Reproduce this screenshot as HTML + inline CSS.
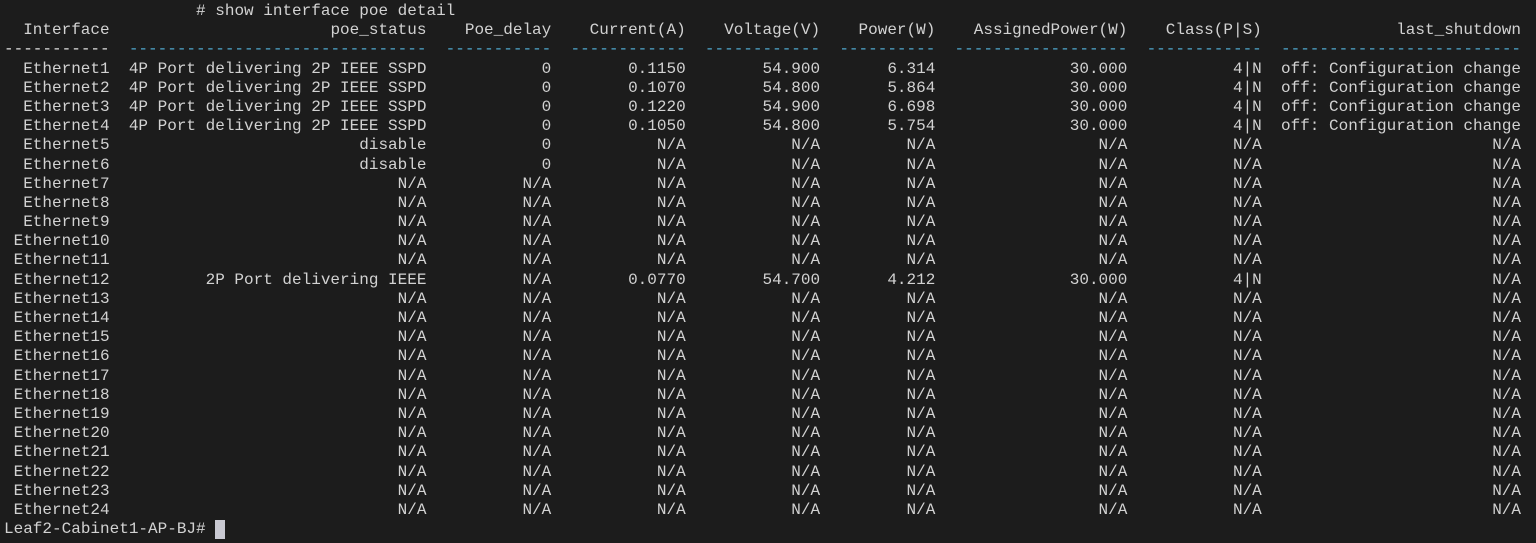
<!DOCTYPE html>
<html><head><meta charset="utf-8">
<style>
html,body{margin:0;padding:0;background:#1c1c1c;width:1536px;height:543px;overflow:hidden}
#t{position:absolute;left:4px;top:2px;font-family:"Liberation Mono",monospace;font-size:16px;line-height:19.2px;color:#d2d2d2;white-space:normal}
.r{display:flex;height:19.2px}
.r span{display:block;text-align:right;margin-right:2ch;overflow:visible;white-space:pre}
.r span:last-child{margin-right:0}
.c1{width:11ch}.c2{width:31ch}.c3{width:11ch}.c4{width:12ch}.c5{width:12ch}.c6{width:10ch}.c7{width:18ch}.c8{width:12ch}.c9{width:25ch}
.d span{color:#4fa9cf}
.d span.c1{color:#e0e0e0}
.cur{display:inline-block;width:10px;height:19px;background:#c9c9d2;vertical-align:top;margin-left:9px}
</style></head><body>
<div id="t"><div class="r"><span style="text-align:left">                    # show interface poe detail</span></div>
<div class="r"><span class="c1">Interface</span><span class="c2">poe_status</span><span class="c3">Poe_delay</span><span class="c4">Current(A)</span><span class="c5">Voltage(V)</span><span class="c6">Power(W)</span><span class="c7">AssignedPower(W)</span><span class="c8">Class(P|S)</span><span class="c9">last_shutdown</span></div>
<div class="r d"><span class="c1">-----------</span><span class="c2">-------------------------------</span><span class="c3">-----------</span><span class="c4">------------</span><span class="c5">------------</span><span class="c6">----------</span><span class="c7">------------------</span><span class="c8">------------</span><span class="c9">-------------------------</span></div>
<div class="r"><span class="c1">Ethernet1</span><span class="c2">4P Port delivering 2P IEEE SSPD</span><span class="c3">0</span><span class="c4">0.1150</span><span class="c5">54.900</span><span class="c6">6.314</span><span class="c7">30.000</span><span class="c8">4|N</span><span class="c9">off: Configuration change</span></div>
<div class="r"><span class="c1">Ethernet2</span><span class="c2">4P Port delivering 2P IEEE SSPD</span><span class="c3">0</span><span class="c4">0.1070</span><span class="c5">54.800</span><span class="c6">5.864</span><span class="c7">30.000</span><span class="c8">4|N</span><span class="c9">off: Configuration change</span></div>
<div class="r"><span class="c1">Ethernet3</span><span class="c2">4P Port delivering 2P IEEE SSPD</span><span class="c3">0</span><span class="c4">0.1220</span><span class="c5">54.900</span><span class="c6">6.698</span><span class="c7">30.000</span><span class="c8">4|N</span><span class="c9">off: Configuration change</span></div>
<div class="r"><span class="c1">Ethernet4</span><span class="c2">4P Port delivering 2P IEEE SSPD</span><span class="c3">0</span><span class="c4">0.1050</span><span class="c5">54.800</span><span class="c6">5.754</span><span class="c7">30.000</span><span class="c8">4|N</span><span class="c9">off: Configuration change</span></div>
<div class="r"><span class="c1">Ethernet5</span><span class="c2">disable</span><span class="c3">0</span><span class="c4">N/A</span><span class="c5">N/A</span><span class="c6">N/A</span><span class="c7">N/A</span><span class="c8">N/A</span><span class="c9">N/A</span></div>
<div class="r"><span class="c1">Ethernet6</span><span class="c2">disable</span><span class="c3">0</span><span class="c4">N/A</span><span class="c5">N/A</span><span class="c6">N/A</span><span class="c7">N/A</span><span class="c8">N/A</span><span class="c9">N/A</span></div>
<div class="r"><span class="c1">Ethernet7</span><span class="c2">N/A</span><span class="c3">N/A</span><span class="c4">N/A</span><span class="c5">N/A</span><span class="c6">N/A</span><span class="c7">N/A</span><span class="c8">N/A</span><span class="c9">N/A</span></div>
<div class="r"><span class="c1">Ethernet8</span><span class="c2">N/A</span><span class="c3">N/A</span><span class="c4">N/A</span><span class="c5">N/A</span><span class="c6">N/A</span><span class="c7">N/A</span><span class="c8">N/A</span><span class="c9">N/A</span></div>
<div class="r"><span class="c1">Ethernet9</span><span class="c2">N/A</span><span class="c3">N/A</span><span class="c4">N/A</span><span class="c5">N/A</span><span class="c6">N/A</span><span class="c7">N/A</span><span class="c8">N/A</span><span class="c9">N/A</span></div>
<div class="r"><span class="c1">Ethernet10</span><span class="c2">N/A</span><span class="c3">N/A</span><span class="c4">N/A</span><span class="c5">N/A</span><span class="c6">N/A</span><span class="c7">N/A</span><span class="c8">N/A</span><span class="c9">N/A</span></div>
<div class="r"><span class="c1">Ethernet11</span><span class="c2">N/A</span><span class="c3">N/A</span><span class="c4">N/A</span><span class="c5">N/A</span><span class="c6">N/A</span><span class="c7">N/A</span><span class="c8">N/A</span><span class="c9">N/A</span></div>
<div class="r"><span class="c1">Ethernet12</span><span class="c2">2P Port delivering IEEE</span><span class="c3">N/A</span><span class="c4">0.0770</span><span class="c5">54.700</span><span class="c6">4.212</span><span class="c7">30.000</span><span class="c8">4|N</span><span class="c9">N/A</span></div>
<div class="r"><span class="c1">Ethernet13</span><span class="c2">N/A</span><span class="c3">N/A</span><span class="c4">N/A</span><span class="c5">N/A</span><span class="c6">N/A</span><span class="c7">N/A</span><span class="c8">N/A</span><span class="c9">N/A</span></div>
<div class="r"><span class="c1">Ethernet14</span><span class="c2">N/A</span><span class="c3">N/A</span><span class="c4">N/A</span><span class="c5">N/A</span><span class="c6">N/A</span><span class="c7">N/A</span><span class="c8">N/A</span><span class="c9">N/A</span></div>
<div class="r"><span class="c1">Ethernet15</span><span class="c2">N/A</span><span class="c3">N/A</span><span class="c4">N/A</span><span class="c5">N/A</span><span class="c6">N/A</span><span class="c7">N/A</span><span class="c8">N/A</span><span class="c9">N/A</span></div>
<div class="r"><span class="c1">Ethernet16</span><span class="c2">N/A</span><span class="c3">N/A</span><span class="c4">N/A</span><span class="c5">N/A</span><span class="c6">N/A</span><span class="c7">N/A</span><span class="c8">N/A</span><span class="c9">N/A</span></div>
<div class="r"><span class="c1">Ethernet17</span><span class="c2">N/A</span><span class="c3">N/A</span><span class="c4">N/A</span><span class="c5">N/A</span><span class="c6">N/A</span><span class="c7">N/A</span><span class="c8">N/A</span><span class="c9">N/A</span></div>
<div class="r"><span class="c1">Ethernet18</span><span class="c2">N/A</span><span class="c3">N/A</span><span class="c4">N/A</span><span class="c5">N/A</span><span class="c6">N/A</span><span class="c7">N/A</span><span class="c8">N/A</span><span class="c9">N/A</span></div>
<div class="r"><span class="c1">Ethernet19</span><span class="c2">N/A</span><span class="c3">N/A</span><span class="c4">N/A</span><span class="c5">N/A</span><span class="c6">N/A</span><span class="c7">N/A</span><span class="c8">N/A</span><span class="c9">N/A</span></div>
<div class="r"><span class="c1">Ethernet20</span><span class="c2">N/A</span><span class="c3">N/A</span><span class="c4">N/A</span><span class="c5">N/A</span><span class="c6">N/A</span><span class="c7">N/A</span><span class="c8">N/A</span><span class="c9">N/A</span></div>
<div class="r"><span class="c1">Ethernet21</span><span class="c2">N/A</span><span class="c3">N/A</span><span class="c4">N/A</span><span class="c5">N/A</span><span class="c6">N/A</span><span class="c7">N/A</span><span class="c8">N/A</span><span class="c9">N/A</span></div>
<div class="r"><span class="c1">Ethernet22</span><span class="c2">N/A</span><span class="c3">N/A</span><span class="c4">N/A</span><span class="c5">N/A</span><span class="c6">N/A</span><span class="c7">N/A</span><span class="c8">N/A</span><span class="c9">N/A</span></div>
<div class="r"><span class="c1">Ethernet23</span><span class="c2">N/A</span><span class="c3">N/A</span><span class="c4">N/A</span><span class="c5">N/A</span><span class="c6">N/A</span><span class="c7">N/A</span><span class="c8">N/A</span><span class="c9">N/A</span></div>
<div class="r"><span class="c1">Ethernet24</span><span class="c2">N/A</span><span class="c3">N/A</span><span class="c4">N/A</span><span class="c5">N/A</span><span class="c6">N/A</span><span class="c7">N/A</span><span class="c8">N/A</span><span class="c9">N/A</span></div>
<div class="r"><span style="text-align:left">Leaf2-Cabinet1-AP-BJ#<i class="cur"></i></span></div></div>
</body></html>
